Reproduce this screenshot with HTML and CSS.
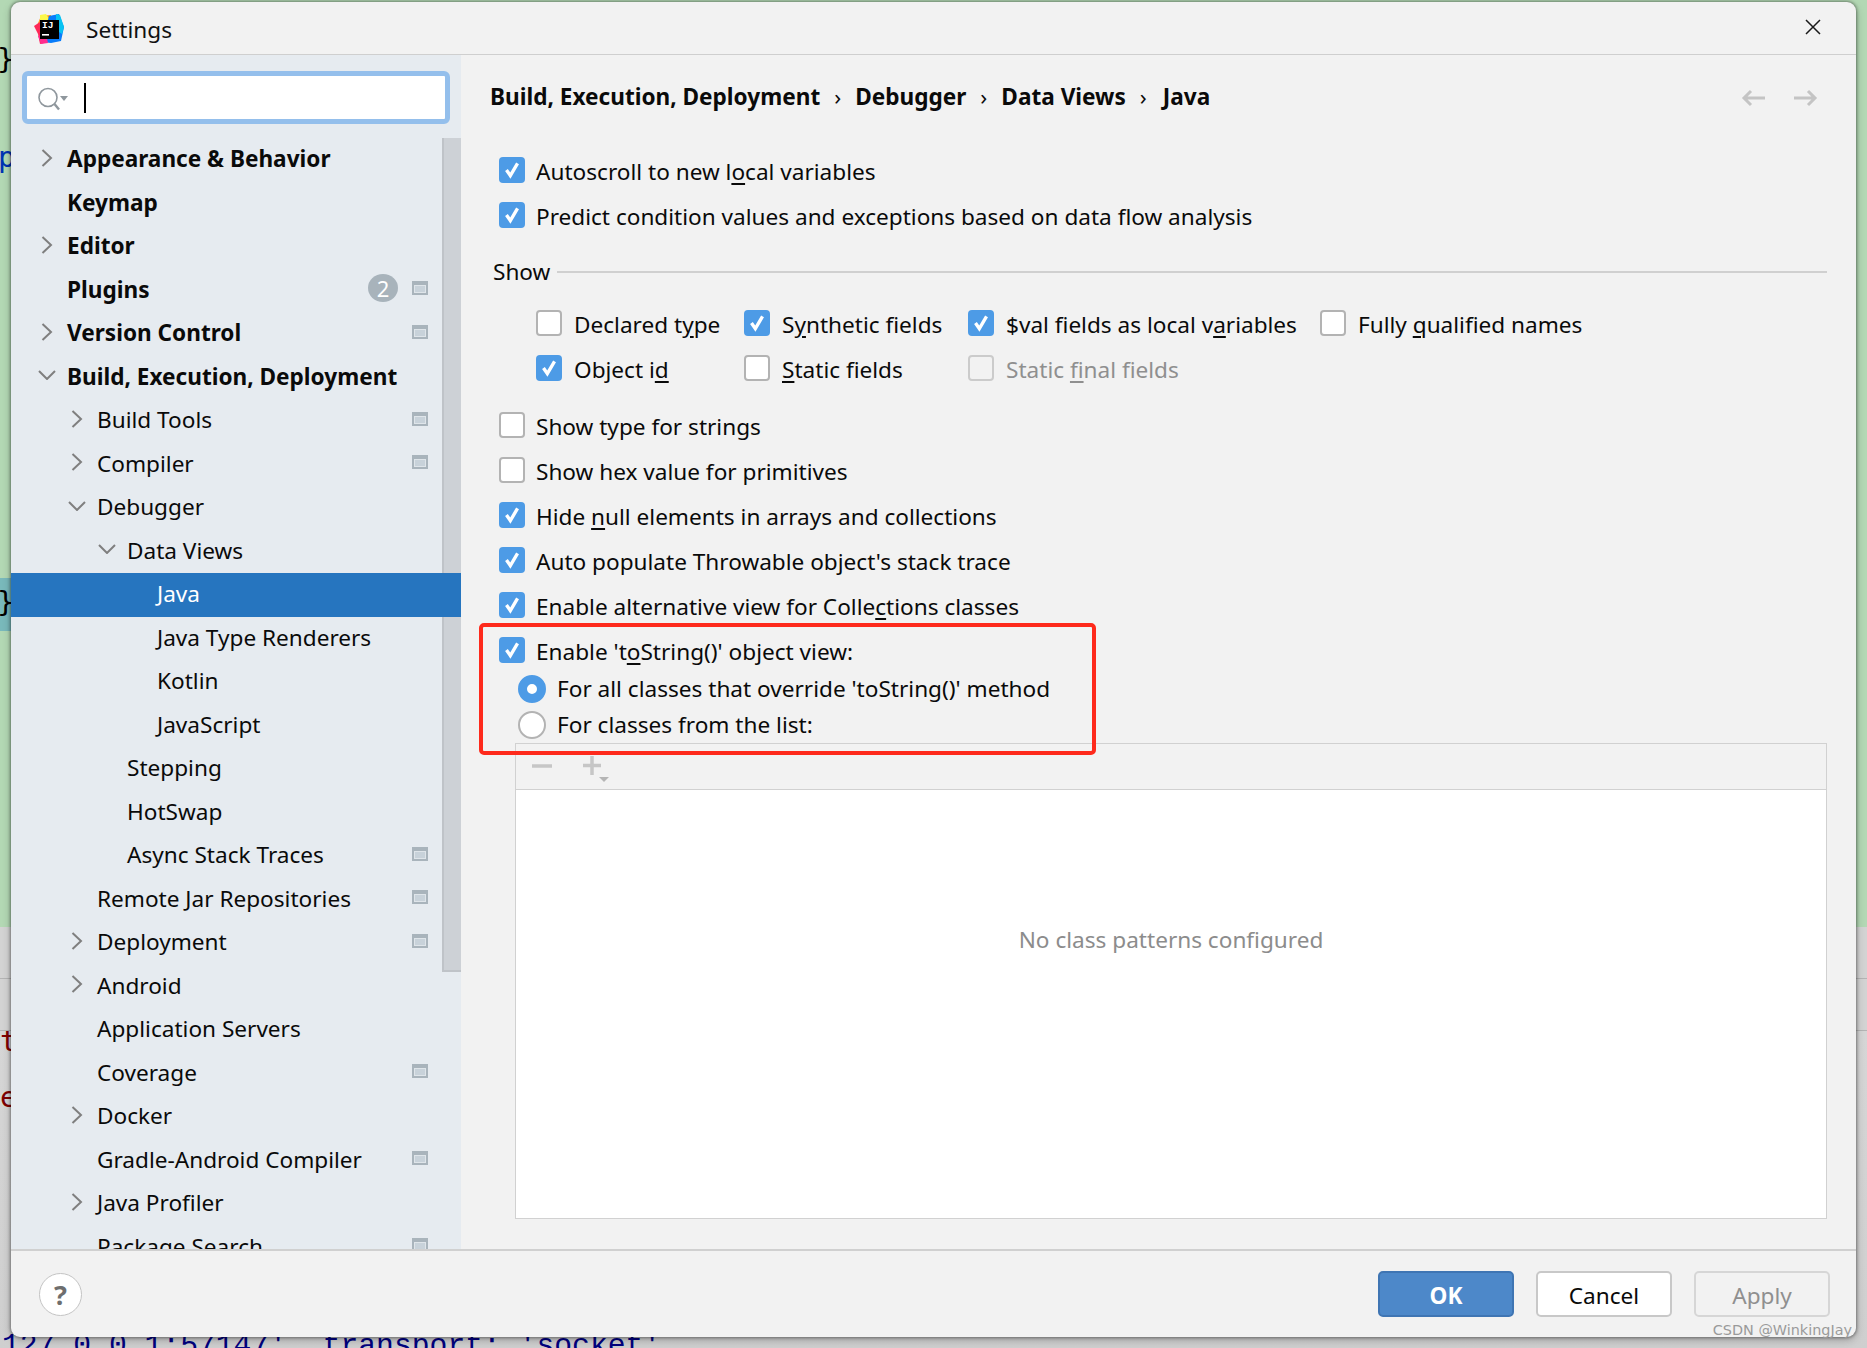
FILE: index.html
```html
<!DOCTYPE html>
<html lang="en">
<head>
<meta charset="utf-8">
<title>Settings</title>
<link rel="stylesheet" href="styles.css">
</head>
<body>
<div class="backdrop">
  <div class="bg-green"></div>
  <div class="bg-band"></div>
  <div class="bg-band"></div>
  <div class="bg-rest"></div>
  <div class="editor-sel"></div>
  <span class="code code-brace1">}</span>
  <span class="code code-p">p</span>
  <span class="code code-brace2">}</span>
  <span class="code code-t">t</span>
  <span class="code code-e">e</span>
  <span class="code code-bottom">127.0.0.1:57147', transport: 'socket'</span>
</div>

<main class="dialog">
  <header class="titlebar">
    <svg class="logo" width="30" height="30" viewBox="0 0 30 30">
      <polygon points="7,2 17,1 17,14 2,14" fill="#ff9419"/>
      <polygon points="0,12 6,8 14,28 6,30 4,20" fill="#fe2857"/>
      <polygon points="6,1 12,0 16,6 6,8" fill="#fcf84a"/>
      <polygon points="15,2 25,0 30,13 27,27 17,29 8,28" fill="#087cfa"/>
      <polygon points="22,0 26,1 30,13 28,20 22,16" fill="#07c3f2"/>
      <polygon points="4,22 12,20 14,29 7,30" fill="#ff2d8f"/>
      <rect x="6" y="6" width="19" height="19" fill="#000"/>
      <text class="logo-text" x="8" y="14">IJ</text>
      <rect x="8" y="20" width="7" height="1.6" fill="#fff"/>
    </svg>
    <span class="title">Settings</span>
    <svg class="close" width="16" height="16" viewBox="0 0 16 16"><path d="M1 1 15 15M15 1 1 15" stroke="#1a1a1a" stroke-width="1.5" fill="none"/></svg>
  </header>

  <div class="body">
    <aside class="sidebar">
      <div class="search">
        <svg width="40" height="28" viewBox="0 0 40 28"><circle cx="11" cy="13.500" r="9" fill="none" stroke="#8f979d" stroke-width="1.6"/><path d="M17.500 20 22 25.500" stroke="#8f979d" stroke-width="2.400"/><path d="M23 12h8l-4 5z" fill="#8f979d"/></svg>
        <span class="caret"></span>
      </div>
      <div class="tree">
        <div class="thumb"></div>
        <div class="row l0 strong"><svg class="chev" viewBox="0 0 12 20"><path d="M1.500 2 10 10 1.500 18"/></svg><span>Appearance &amp; Behavior</span></div>
        <div class="row l0 strong leaf"><span>Keymap</span></div>
        <div class="row l0 strong"><svg class="chev" viewBox="0 0 12 20"><path d="M1.500 2 10 10 1.500 18"/></svg><span>Editor</span></div>
        <div class="row l0 strong leaf"><span>Plugins</span><b class="badge">2</b><i class="proj"></i></div>
        <div class="row l0 strong"><svg class="chev" viewBox="0 0 12 20"><path d="M1.500 2 10 10 1.500 18"/></svg><span>Version Control</span><i class="proj"></i></div>
        <div class="row l0 strong"><svg class="chev-d" viewBox="0 0 18 10"><path d="M1 1 9 9 17 1"/></svg><span>Build, Execution, Deployment</span></div>
        <div class="row l1"><svg class="chev" viewBox="0 0 12 20"><path d="M1.500 2 10 10 1.500 18"/></svg><span>Build Tools</span><i class="proj"></i></div>
        <div class="row l1"><svg class="chev" viewBox="0 0 12 20"><path d="M1.500 2 10 10 1.500 18"/></svg><span>Compiler</span><i class="proj"></i></div>
        <div class="row l1"><svg class="chev-d" viewBox="0 0 18 10"><path d="M1 1 9 9 17 1"/></svg><span>Debugger</span></div>
        <div class="row l2"><svg class="chev-d" viewBox="0 0 18 10"><path d="M1 1 9 9 17 1"/></svg><span>Data Views</span></div>
        <div class="row l3 leaf selected"><span>Java</span></div>
        <div class="row l3 leaf"><span>Java Type Renderers</span></div>
        <div class="row l3 leaf"><span>Kotlin</span></div>
        <div class="row l3 leaf"><span>JavaScript</span></div>
        <div class="row l2 leaf"><span>Stepping</span></div>
        <div class="row l2 leaf"><span>HotSwap</span></div>
        <div class="row l2 leaf"><span>Async Stack Traces</span><i class="proj"></i></div>
        <div class="row l1 leaf"><span>Remote Jar Repositories</span><i class="proj"></i></div>
        <div class="row l1"><svg class="chev" viewBox="0 0 12 20"><path d="M1.500 2 10 10 1.500 18"/></svg><span>Deployment</span><i class="proj"></i></div>
        <div class="row l1"><svg class="chev" viewBox="0 0 12 20"><path d="M1.500 2 10 10 1.500 18"/></svg><span>Android</span></div>
        <div class="row l1 leaf"><span>Application Servers</span></div>
        <div class="row l1 leaf"><span>Coverage</span><i class="proj"></i></div>
        <div class="row l1"><svg class="chev" viewBox="0 0 12 20"><path d="M1.500 2 10 10 1.500 18"/></svg><span>Docker</span></div>
        <div class="row l1 leaf"><span>Gradle-Android Compiler</span><i class="proj"></i></div>
        <div class="row l1"><svg class="chev" viewBox="0 0 12 20"><path d="M1.500 2 10 10 1.500 18"/></svg><span>Java Profiler</span></div>
        <div class="row l1 leaf"><span>Package Search</span><i class="proj"></i></div>
      </div>
    </aside>

    <section class="panel">
      <div class="crumbs">
        <span>Build, Execution, Deployment</span><em>›</em><span>Debugger</span><em>›</em><span>Data Views</span><em>›</em><span class="last">Java</span>
        <div class="nav">
          <svg width="24" height="18" viewBox="0 0 24 18"><path d="M24 9H3M10 2 3 9l7 7" fill="none" stroke="#c4c4c4" stroke-width="3"/></svg>
          <svg width="24" height="18" viewBox="0 0 24 18"><path d="M0 9h21M14 2l7 7-7 7" fill="none" stroke="#c4c4c4" stroke-width="3"/></svg>
        </div>
      </div>

      <div class="opts first">
        <label class="opt"><i class="cb on"></i><span>Autoscroll to new l<u>o</u>cal variables</span></label>
        <label class="opt"><i class="cb on"></i><span>Predict condition values and exceptions based on data flow analysis</span></label>
      </div>

      <div class="show"><span>Show</span><hr></div>

      <div class="grid">
        <label class="opt"><i class="cb"></i><span>Declared t<u>y</u>pe</span></label>
        <label class="opt"><i class="cb on"></i><span>S<u>y</u>nthetic fields</span></label>
        <label class="opt"><i class="cb on"></i><span>$val fields as local v<u>a</u>riables</span></label>
        <label class="opt"><i class="cb"></i><span>Fully <u>q</u>ualified names</span></label>
        <label class="opt"><i class="cb on"></i><span>Object i<u>d</u></span></label>
        <label class="opt"><i class="cb"></i><span><u>S</u>tatic fields</span></label>
        <label class="opt muted"><i class="cb off"></i><span>Static <u>f</u>inal fields</span></label>
      </div>

      <div class="opts second">
        <label class="opt"><i class="cb"></i><span>Show type for strings</span></label>
        <label class="opt"><i class="cb"></i><span>Show hex value for primitives</span></label>
        <label class="opt"><i class="cb on"></i><span>Hide <u>n</u>ull elements in arrays and collections</span></label>
        <label class="opt"><i class="cb on"></i><span>Auto populate Throwable object's stack trace</span></label>
        <label class="opt"><i class="cb on"></i><span>Enable alternative view for Colle<u>c</u>tions classes</span></label>
        <label class="opt"><i class="cb on"></i><span>Enable 't<u>o</u>String()' object view:</span></label>
      </div>

      <div class="radios">
        <label class="opt radio"><i class="rb on"></i><span>For all classes that override 'toString()' method</span></label>
        <label class="opt radio"><i class="rb"></i><span>For classes from the list:</span></label>
      </div>

      <div class="table">
        <div class="toolbar">
          <svg width="20" height="6" viewBox="0 0 20 6"><path d="M0 3h20" stroke="#c6c6c6" stroke-width="3.500"/></svg>
          <svg width="28" height="28" viewBox="0 0 28 28"><path d="M10 1v19M1 10.500h18" stroke="#c6c6c6" stroke-width="3.500" fill="none"/><path d="M17 22h10l-5 5z" fill="#b5b5b5"/></svg>
        </div>
        <div class="table-body">No class patterns configured</div>
      </div>
    </section>
  </div>

  <footer class="footer">
    <button class="help" type="button">?</button>
    <div class="actions">
      <button class="btn primary" type="button">OK</button>
      <button class="btn" type="button">Cancel</button>
      <button class="btn disabled" type="button">Apply</button>
    </div>
  </footer>

  <div class="annotation"></div>
</main>
<span class="watermark">CSDN @WinkingJay</span>
</body>
</html>
```
FILE: styles.css
```css
* { box-sizing: border-box; }
html, body { margin: 0; padding: 0; }
body {
  position: relative;
  width: 1867px;
  height: 1348px;
  overflow: hidden;
  font-family: "Noto Sans", "Open Sans", sans-serif;
  font-size: 22.600px;
  color: #0a0a0a;
  background: #d4d4d4;
}

/* backdrop: the IDE behind the dialog */
.backdrop { display: flex; flex-direction: column; height: 1348px; }
.bg-green { height: 927px; background: #b3d8b4; }
.bg-band { height: 52px; background: #d3d3d3; border-bottom: 1px solid #b4b4b4; }
.bg-rest { flex: 1; background: linear-gradient(#d6d6d6, #cfcfcf); }
.editor-sel { position: absolute; left: 0; top: 578px; width: 12px; height: 53px; background: #79b9bb; }
.code { position: absolute; font-family: "DejaVu Sans Mono", monospace; font-size: 29px; line-height: 34px; white-space: pre; }
.code-brace1 { left: -3px; top: 42px; color: #000; }
.code-brace2 { left: -3px; top: 585px; color: #000; }
.code-p { left: -2px; top: 140px; color: #0033b3; }
.code-t { left: 0; top: 1024px; color: #7f0000; }
.code-e { left: 0; top: 1080px; color: #7f0000; }
.code-bottom { left: 2px; top: 1329px; color: #000080; font-family: "Liberation Mono", monospace; font-size: 29.700px; }

/* dialog window */
.dialog {
  position: absolute;
  left: 11px;
  top: 2px;
  width: 1845px;
  height: 1335px;
  display: flex;
  flex-direction: column;
  background: #f2f2f2;
  border-radius: 9px;
  box-shadow: 0 0 3px 1px rgba(0, 0, 0, .35), 0 3px 8px rgba(0, 0, 0, .25);
  overflow: hidden;
}
.titlebar {
  flex: none;
  height: 53px;
  display: flex;
  align-items: center;
  padding: 0 35px 0 23px;
  border-bottom: 1px solid #cfcfcf;
}
.logo { flex: none; margin-top: 1px; }
.logo-text { font-family: "Liberation Mono", monospace; font-size: 9.500px; font-weight: 700; fill: #fff; }
.title { margin-left: 22px; margin-top: 2px; color: #111; }
.close { margin-left: auto; margin-top: -2px; }

.body { flex: 1; display: flex; min-height: 0; }

/* sidebar */
.sidebar {
  flex: none;
  width: 450px;
  background: #e6ebf0;
  display: flex;
  flex-direction: column;
  overflow: hidden;
}
.search {
  flex: none;
  margin: 16px 0 0 11px;
  width: 428px;
  height: 53px;
  display: flex;
  align-items: center;
  gap: 7px;
  padding-left: 10px;
  background: #fff;
  border: 5px solid #94bfec;
  border-radius: 6px;
}
.caret { width: 2px; height: 30px; background: #000; }
.tree { position: relative; flex: 1; margin-top: 14px; min-height: 0; }
.thumb {
  position: absolute;
  right: 0;
  top: 0;
  width: 19px;
  height: 834px;
  background: #cdd1d6;
  border-left: 2px solid #bfc3c8;
  border-bottom: 2px solid #bfc3c8;
}
.row {
  position: relative;
  height: 43.500px;
  display: flex;
  align-items: center;
  padding-right: 33px;
  padding-bottom: 2px;
  white-space: nowrap;
}
.row.strong { font-weight: 700; }
.row.l0 { padding-left: 30px; }
.row.l1 { padding-left: 60px; }
.row.l2 { padding-left: 90px; }
.row.l3 { padding-left: 120px; }
.row.leaf > span:first-child { margin-left: 26px; }
.chev, .chev-d { flex: none; fill: none; stroke: #7f7f7f; stroke-width: 2; }
.chev { width: 12px; height: 20px; margin-right: 14px; margin-top: -2px; }
.chev-d { width: 18px; height: 10px; margin-left: -3px; margin-right: 11px; margin-top: -2px; }
.row.selected { background: #2675bf; color: #fff; z-index: 1; }
.badge {
  margin-left: auto;
  margin-top: -2px;
  width: 30px;
  height: 28px;
  border-radius: 50%;
  background: #a8b3bb;
  color: #fff;
  font-size: 22px;
  font-weight: 400;
  line-height: 28px;
  text-align: center;
}
.proj {
  flex: none;
  margin-left: auto;
  margin-top: -2px;
  width: 16px;
  height: 14px;
  background: #c8d2da;
  border: 2px solid #a9b4bc;
  border-top-width: 4px;
  box-shadow: inset 0 0 0 1px #dfe5ea;
}
.badge + .proj { margin-left: 14px; }

/* settings panel */
.panel { flex: 1; min-width: 0; padding: 0 29px 0 30px; display: flex; flex-direction: column; }
.crumbs {
  flex: none;
  height: 86px;
  margin-left: -1px;
  padding-bottom: 3px;
  display: flex;
  align-items: center;
  font-weight: 700;
}
.crumbs em { margin: 0 14px; font-style: normal; font-weight: 400; }
.crumbs .last { margin-left: 2px; }
.nav { margin-left: auto; margin-right: 9px; margin-top: 3px; display: flex; gap: 29px; }

.opts { display: flex; flex-direction: column; }
.opts.first { margin-top: 8px; }
.opts.second { margin-top: 12px; }
.opt { height: 45px; display: flex; align-items: center; white-space: nowrap; }
.opts .opt { padding-left: 8px; }
.opt u { text-underline-offset: 3px; text-decoration-thickness: 2px; }
.cb {
  flex: none;
  width: 26px;
  height: 26px;
  margin-right: 11px;
  margin-top: -3px;
  background: #fff center / 20px 20px no-repeat;
  border: 2px solid #b3b3b3;
  border-radius: 4px;
}
.grid .cb { margin-right: 12px; }
.cb.on {
  border: 0;
  background-color: #4d9be6;
  background-image: url("data:image/svg+xml,%3Csvg xmlns='http://www.w3.org/2000/svg' viewBox='0 0 18 18'%3E%3Cpath d='M4 9l3.500 5L14 3' fill='none' stroke='white' stroke-width='3'/%3E%3C/svg%3E");
}
.cb.off { background: #f2f2f2; border-color: #cbcbcb; }
.muted { color: #8f8f8f; }

.show { flex: none; margin-top: 11px; height: 44px; padding-left: 2px; display: flex; align-items: center; gap: 7px; }
.show span { margin-top: -1px; }
.show hr { flex: 1; margin: 0; border: 0; height: 2px; background: #d0d0d0; }

.grid {
  margin-top: 8px;
  padding-left: 45px;
  display: grid;
  grid-template-columns: 208px 224px 352px auto;
  grid-auto-rows: 45px;
}
.radios { margin-top: -3.500px; padding-left: 27px; display: flex; flex-direction: column; }
.opt.radio { height: 36px; }
.rb {
  flex: none;
  width: 28px;
  height: 28px;
  margin-right: 11px;
  border-radius: 50%;
  background: #fff;
  border: 2px solid #b3b3b3;
}
.rb.on { background: #fff; border: 9px solid #4d9be6; }

.table {
  flex: none;
  margin: 0 0 0 24px;
  height: 476px;
  display: flex;
  flex-direction: column;
  border: 1px solid #d1d1d1;
}
.toolbar {
  flex: none;
  height: 46px;
  display: flex;
  align-items: center;
  gap: 30px;
  padding-left: 16px;
  border-bottom: 1px solid #d1d1d1;
}
.toolbar svg:last-child { margin-top: 6px; }
.table-body {
  flex: 1;
  background: #fff;
  padding-top: 134px;
  text-align: center;
  color: #8c8c8c;
}

/* footer */
.footer {
  flex: none;
  height: 88px;
  display: flex;
  align-items: center;
  padding: 0 26px 0 28px;
  border-top: 2px solid #d0d0d0;
}
.help {
  width: 43px;
  height: 43px;
  padding: 0;
  border-radius: 50%;
  background: #fff;
  border: 1px solid #c4c4c4;
  font: 700 27px "Noto Sans", sans-serif;
  color: #6e6e6e;
}
.actions { margin-left: auto; display: flex; gap: 22px; }
.btn {
  width: 136px;
  height: 46px;
  padding: 2px 0 0;
  background: #fff;
  border: 2px solid #c8c8c8;
  border-radius: 5px;
  font: 22.600px "Noto Sans", sans-serif;
  color: #0a0a0a;
}
.btn.primary { background: #4d88c9; border-color: #3f75b3; color: #fff; font-weight: 700; }
.btn.disabled { background: #f2f2f2; border-color: #d6d6d6; color: #8f8f8f; }

/* annotation and watermark lying over the dialog */
.annotation {
  position: absolute;
  left: 468px;
  top: 621px;
  width: 617px;
  height: 132px;
  border: 4px solid #fe2a1c;
  border-radius: 5px;
}
.watermark {
  position: absolute;
  right: 15px;
  top: 1320px;
  font: 14.400px/20px "DejaVu Sans", sans-serif;
  color: #9a9a9a;
}
```
